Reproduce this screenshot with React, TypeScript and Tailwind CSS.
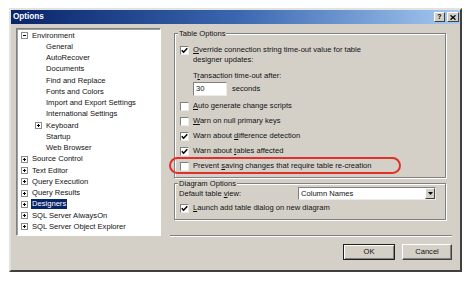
import React from "react";

const Check = ({ checked }: { checked: boolean }) => (
  <div className="w-[9px] h-[9px] shrink-0 bg-white border border-t-[#808080] border-l-[#808080] border-r-[#ecebe7] border-b-[#ecebe7] flex items-center justify-center">
    {checked && (
      <svg width="7" height="7" viewBox="0 0 7 7">
        <path d="M0.8 3.2 L2.6 5.2 L6.3 1.2" stroke="#000" strokeWidth="1.5" fill="none" />
      </svg>
    )}
  </div>
);

const Exp = ({ open }: { open: boolean }) => (
  <svg width="7" height="7" viewBox="0 0 7 7" className="shrink-0">
    <rect x="0.5" y="0.5" width="6" height="6" fill="#fff" stroke="#8c8c8c" />
    <path d="M2 3.5H5" stroke="#000" />
    {!open && <path d="M3.5 2V5" stroke="#000" />}
  </svg>
);

type Node = { label: string; level: 0 | 1; exp?: "open" | "closed"; selected?: boolean };

const tree: Node[] = [
  { label: "Environment", level: 0, exp: "open" },
  { label: "General", level: 1 },
  { label: "AutoRecover", level: 1 },
  { label: "Documents", level: 1 },
  { label: "Find and Replace", level: 1 },
  { label: "Fonts and Colors", level: 1 },
  { label: "Import and Export Settings", level: 1 },
  { label: "International Settings", level: 1 },
  { label: "Keyboard", level: 1, exp: "closed" },
  { label: "Startup", level: 1 },
  { label: "Web Browser", level: 1 },
  { label: "Source Control", level: 0, exp: "closed" },
  { label: "Text Editor", level: 0, exp: "closed" },
  { label: "Query Execution", level: 0, exp: "closed" },
  { label: "Query Results", level: 0, exp: "closed" },
  { label: "Designers", level: 0, exp: "closed", selected: true },
  { label: "SQL Server AlwaysOn", level: 0, exp: "closed" },
  { label: "SQL Server Object Explorer", level: 0, exp: "closed" },
];

const U = ({ children }: { children: React.ReactNode }) => (
  <u className="underline underline-offset-[1px]">{children}</u>
);

const CheckRow = ({ checked, children }: { checked: boolean; children: React.ReactNode }) => (
  <div className="h-[10px] flex items-center gap-[4px]">
    <Check checked={checked} />
    <span className="leading-[10px] whitespace-nowrap">{children}</span>
  </div>
);

const Button = ({ children, w, isDefault }: { children: React.ReactNode; w: string; isDefault?: boolean }) => (
  <div
    className={`${w} h-[16px] bg-[#d4d0c8] border flex items-center justify-center leading-[10px] ${
      isDefault
        ? "border-[#202020] shadow-[inset_1px_1px_0_#fff,inset_-1px_-1px_0_#808080]"
        : "border-t-white border-l-white border-r-[#404040] border-b-[#404040] shadow-[inset_-1px_-1px_0_#808080]"
    }`}
  >
    {children}
  </div>
);

export default function App() {
  return (
    <div className="w-[474px] h-[285px] bg-white overflow-hidden text-[#111] text-[7.6px] font-[family-name:'Liberation_Sans',Arial,sans-serif]">
      <div className="ml-[9px] mt-[8px] w-[453px] h-[264px] bg-[#d4d0c8] border-2 border-t-[#e4e2dd] border-l-[#e4e2dd] border-r-[#404040] border-b-[#404040] flex flex-col">
        {/* Title bar */}
        <div className="h-[14px] shrink-0 flex items-center bg-linear-to-r from-[#0a246a] via-[#3a66b0] to-[#a6caf0] pl-[2px] pr-[1px]">
          <span className="text-white font-bold text-[8.2px] leading-[10px]">Options</span>
          <div className="ml-auto flex gap-[2px]">
            <div className="w-[11px] h-[10px] bg-[#d4d0c8] border border-t-white border-l-white border-r-[#404040] border-b-[#404040] flex items-center justify-center text-[7px] font-bold leading-[8px] text-black">
              ?
            </div>
            <div className="w-[12px] h-[10px] bg-[#d4d0c8] border border-t-white border-l-white border-r-[#404040] border-b-[#404040] flex items-center justify-center">
              <svg width="6" height="5" viewBox="0 0 6 5">
                <path d="M0.5 0.3 L5.5 4.7 M5.5 0.3 L0.5 4.7" stroke="#000" strokeWidth="1.3" />
              </svg>
            </div>
          </div>
        </div>

        {/* Body */}
        <div className="flex-1 flex pl-[5px] pt-[4px]">
          {/* Tree */}
          <div className="w-[145px] h-[208px] shrink-0 bg-white border border-t-[#808080] border-l-[#808080] border-r-white border-b-white shadow-[inset_1px_1px_0_#a0a0a0] pt-[1px] pl-[1px]">
            {tree.map((n) => (
              <div
                key={n.label}
                className={`h-[11.25px] flex items-center ${n.level === 0 ? "pl-[3px]" : "pl-[17px]"}`}
              >
                {n.exp ? <Exp open={n.exp === "open"} /> : <div className="w-[7px] shrink-0" />}
                <span
                  className={`ml-[3px] px-[1px] leading-[10px] whitespace-nowrap ${
                    n.selected ? "bg-[#0a246a] text-white" : ""
                  }`}
                >
                  {n.label}
                </span>
              </div>
            ))}
          </div>

          {/* Right column */}
          <div className="ml-[9px] w-[282px] flex flex-col relative">
            {/* Table Options */}
            <div className="mt-[5px] ml-[4px] w-[272px] h-[145px] relative border border-[#808080] shadow-[inset_1px_1px_0_#fff,1px_1px_0_#fff] pl-[5px] pt-[11px]">
              <div className="absolute left-[3px] -top-[5px] px-[1px] leading-[10px] bg-[#d4d0c8]">Table Options</div>
              <div className="flex items-start gap-[4px]">
                <div className="mt-[1px]">
                  <Check checked />
                </div>
                <span className="leading-[10px]">
                  <U>O</U>verride connection string time-out value for table
                  <br />
                  designer updates:
                </span>
              </div>
              <div className="mt-[6px] pl-[13px] leading-[10px]">
                T<U>r</U>ansaction time-out after:
              </div>
              <div className="mt-[1px] pl-[13px] flex items-center gap-[5px]">
                <div className="w-[34px] h-[14px] bg-white border border-t-[#808080] border-l-[#808080] border-r-[#ecebe7] border-b-[#ecebe7] flex items-center pl-[2px] leading-[10px]">
                  30
                </div>
                <span className="leading-[10px]">seconds</span>
              </div>
              <div className="mt-[5px] flex flex-col gap-[5px]">
                <CheckRow checked={false}>
                  <U>A</U>uto generate change scripts
                </CheckRow>
                <CheckRow checked={false}>
                  <U>W</U>arn on null primary keys
                </CheckRow>
                <CheckRow checked>
                  Warn about <U>d</U>ifference detection
                </CheckRow>
                <CheckRow checked>
                  Warn about <U>t</U>ables affected
                </CheckRow>
                <CheckRow checked={false}>
                  Prevent <U>s</U>aving changes that require table re-creation
                </CheckRow>
              </div>
            </div>

            {/* Diagram Options */}
            <div className="mt-[5px] ml-[4px] w-[272px] h-[37px] relative border border-[#808080] shadow-[inset_1px_1px_0_#fff,1px_1px_0_#fff] pl-[5px] pt-[3px] pr-[9px]">
              <div className="absolute left-[3px] -top-[5px] px-[1px] leading-[10px] bg-[#d4d0c8]">Diagram Options</div>
              <div className="flex items-center justify-between">
                <span className="leading-[10px] -ml-[1px]">
                  Default table <U>v</U>iew:
                </span>
                <div className="w-[138px] h-[13px] bg-white border border-t-[#808080] border-l-[#808080] border-r-[#ecebe7] border-b-[#ecebe7] flex items-center">
                  <span className="pl-[2px] leading-[10px] flex-1">Column Names</span>
                  <div className="w-[10px] h-full bg-[#d4d0c8] border border-t-white border-l-white border-r-[#404040] border-b-[#404040] flex items-center justify-center">
                    <svg width="5" height="3" viewBox="0 0 5 3">
                      <path d="M0 0 H5 L2.5 3 Z" fill="#000" />
                    </svg>
                  </div>
                </div>
              </div>
              <div className="mt-[3px]">
                <CheckRow checked>
                  <U>L</U>aunch add table dialog on new diagram
                </CheckRow>
              </div>
            </div>

            {/* Separator */}
            <div className="mt-[15px] h-[2px] border-t border-t-[#808080] border-b border-b-white" />

            {/* Buttons */}
            <div className="mt-[7px] flex justify-end gap-[7px]">
              <Button w="w-[52px]" isDefault>
                OK
              </Button>
              <Button w="w-[50px]">Cancel</Button>
            </div>

            {/* Red annotation oval */}
            <div className="absolute left-[-1px] top-[129px] w-[232px] h-[17px] border-2 border-[#e0302a] rounded-full" />
          </div>
        </div>
      </div>
    </div>
  );
}
